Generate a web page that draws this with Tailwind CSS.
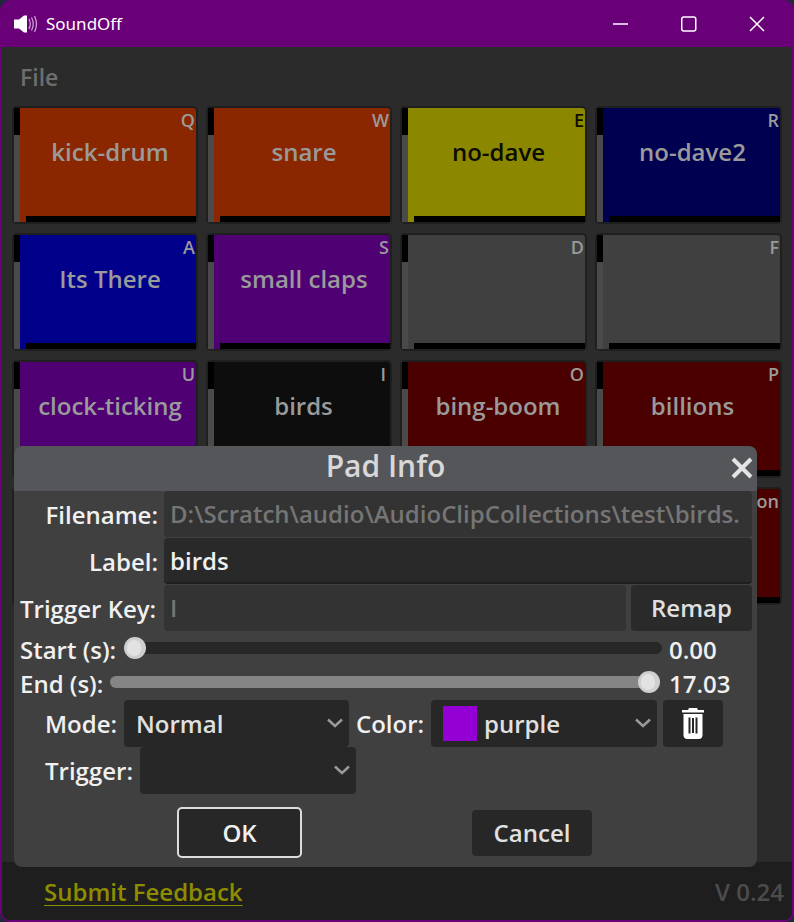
<!DOCTYPE html>
<html lang="en">
<head>
  <meta charset="UTF-8">
  <title>SoundOff</title>
  <script src="https://cdn.jsdelivr.net/npm/@tailwindcss/browser@4"></script>
</head>
<body class="bg-[#1b2a38] font-['Open_Sans','Noto_Sans',sans-serif] font-semibold">
  <div class="relative w-[794px] h-[922px] overflow-hidden rounded-[10px] bg-[#6a0078] flex flex-col">
    <!-- title bar -->
    <div class="h-[47px] shrink-0 flex items-center text-white">
      <svg class="ml-[13px] w-[25px] h-[20px]" viewBox="0 0 25 20" fill="none">
        <path d="M1 5.500h5l5-4h3v17h-3l-5-4H1z" fill="#fff"/>
        <path d="M16 5q2.500 5 0 10M18.500 3.500q3.500 6.500 0 13M21.500 2q4 8 0 16" stroke="#c9a0d4" stroke-width="1.300"/>
      </svg>
      <span class="ml-[8px] text-[17px] font-normal font-['Noto_Sans',sans-serif]">SoundOff</span>
      <svg class="ml-auto mr-[29px] w-[153px] h-[16px]" viewBox="0 0 153 16" fill="none" stroke="#fff">
        <path d="M1 8h15" stroke-width="1.500"/>
        <rect x="69.750" y="1" width="14" height="14" rx="2" stroke-width="1.500"/>
        <path d="M138 1l14 14M152 1l-14 14" stroke-width="1.500"/>
      </svg>
    </div>

    <div class="flex-1 mx-[2px] mb-[2px] rounded-b-[8px] bg-[#2b2b2b] flex flex-col overflow-hidden">
      <div class="h-[59px] shrink-0 pl-[18px] pt-[15px] text-[23px] leading-[30px] text-[#6e6e6e]">File</div>

      <!-- pads -->
      <div class="ml-[10px] grid grid-cols-[186px_186px_187px_187px] auto-rows-[118px] gap-x-[8px] gap-y-[9px]">
        <div class="flex rounded-[5px] bg-[#1f1f1f] p-[2px] h-[118px]">
          <div class="w-[6px] flex flex-col bg-[#4a4a4a]"><div class="h-[27px] bg-black"></div></div>
          <div class="relative flex-1 flex flex-col rounded-tr-[3px] bg-[#8b2700] text-[#9a9a9a]">
            <span class="absolute top-[1px] right-[1px] text-[18px] leading-[22px]">Q</span>
            <div class="flex-1 pt-[27px] pl-[4px] text-center text-[24px] leading-[34px]">kick-drum</div>
            <div class="ml-[6px] h-[6px] bg-black"></div>
          </div>
        </div>
        <div class="flex rounded-[5px] bg-[#1f1f1f] p-[2px] h-[118px]">
          <div class="w-[6px] flex flex-col bg-[#4a4a4a]"><div class="h-[27px] bg-black"></div></div>
          <div class="relative flex-1 flex flex-col rounded-tr-[3px] bg-[#8b2700] text-[#9a9a9a]">
            <span class="absolute top-[1px] right-[1px] text-[18px] leading-[22px]">W</span>
            <div class="flex-1 pt-[27px] pl-[4px] text-center text-[24px] leading-[34px]">snare</div>
            <div class="ml-[6px] h-[6px] bg-black"></div>
          </div>
        </div>
        <div class="flex rounded-[5px] bg-[#1f1f1f] p-[2px] h-[118px]">
          <div class="w-[6px] flex flex-col bg-[#4a4a4a]"><div class="h-[27px] bg-black"></div></div>
          <div class="relative flex-1 flex flex-col rounded-tr-[3px] bg-[#8b8800] text-[#0c0c00]">
            <span class="absolute top-[1px] right-[1px] text-[18px] leading-[22px]">E</span>
            <div class="flex-1 pt-[27px] pl-[4px] text-center text-[24px] leading-[34px]">no-dave</div>
            <div class="ml-[6px] h-[6px] bg-black"></div>
          </div>
        </div>
        <div class="flex rounded-[5px] bg-[#1f1f1f] p-[2px] h-[118px]">
          <div class="w-[6px] flex flex-col bg-[#4a4a4a]"><div class="h-[27px] bg-black"></div></div>
          <div class="relative flex-1 flex flex-col rounded-tr-[3px] bg-[#000050] text-[#9a9a9a]">
            <span class="absolute top-[1px] right-[1px] text-[18px] leading-[22px]">R</span>
            <div class="flex-1 pt-[27px] pl-[2px] text-center text-[24px] leading-[34px]">no-dave2</div>
            <div class="ml-[6px] h-[6px] bg-black"></div>
          </div>
        </div>

        <div class="flex rounded-[5px] bg-[#1f1f1f] p-[2px] h-[118px]">
          <div class="w-[6px] flex flex-col bg-[#4a4a4a]"><div class="h-[27px] bg-black"></div></div>
          <div class="relative flex-1 flex flex-col rounded-tr-[3px] bg-[#00008b] text-[#9a9a9a]">
            <span class="absolute top-[1px] right-[1px] text-[18px] leading-[22px]">A</span>
            <div class="flex-1 pt-[27px] pl-[4px] text-center text-[24px] leading-[34px]">Its There</div>
            <div class="ml-[6px] h-[6px] bg-black"></div>
          </div>
        </div>
        <div class="flex rounded-[5px] bg-[#1f1f1f] p-[2px] h-[118px]">
          <div class="w-[6px] flex flex-col bg-[#4a4a4a]"><div class="h-[27px] bg-black"></div></div>
          <div class="relative flex-1 flex flex-col rounded-tr-[3px] bg-[#4f0072] text-[#9a9a9a]">
            <span class="absolute top-[1px] right-[1px] text-[18px] leading-[22px]">S</span>
            <div class="flex-1 pt-[27px] pl-[4px] text-center text-[24px] leading-[34px]">small claps</div>
            <div class="ml-[6px] h-[6px] bg-black"></div>
          </div>
        </div>
        <div class="flex rounded-[5px] bg-[#1f1f1f] p-[2px] h-[118px]">
          <div class="w-[6px] flex flex-col bg-[#4a4a4a]"><div class="h-[27px] bg-black"></div></div>
          <div class="relative flex-1 flex flex-col rounded-tr-[3px] bg-[#404040] text-[#9a9a9a]">
            <span class="absolute top-[1px] right-[1px] text-[18px] leading-[22px]">D</span>
            <div class="flex-1"></div>
            <div class="ml-[6px] h-[6px] bg-black"></div>
          </div>
        </div>
        <div class="flex rounded-[5px] bg-[#1f1f1f] p-[2px] h-[118px]">
          <div class="w-[6px] flex flex-col bg-[#4a4a4a]"><div class="h-[27px] bg-black"></div></div>
          <div class="relative flex-1 flex flex-col rounded-tr-[3px] bg-[#404040] text-[#9a9a9a]">
            <span class="absolute top-[1px] right-[1px] text-[18px] leading-[22px]">F</span>
            <div class="flex-1"></div>
            <div class="ml-[6px] h-[6px] bg-black"></div>
          </div>
        </div>

        <div class="flex rounded-[5px] bg-[#1f1f1f] p-[2px] h-[118px]">
          <div class="w-[6px] flex flex-col bg-[#4a4a4a]"><div class="h-[27px] bg-black"></div></div>
          <div class="relative flex-1 flex flex-col rounded-tr-[3px] bg-[#4f0072] text-[#9a9a9a]">
            <span class="absolute top-[1px] right-[1px] text-[18px] leading-[22px]">U</span>
            <div class="flex-1 pt-[27px] pl-[4px] text-center text-[24px] leading-[34px]">clock-ticking</div>
            <div class="ml-[6px] h-[6px] bg-black"></div>
          </div>
        </div>
        <div class="flex rounded-[5px] bg-[#1f1f1f] p-[2px] h-[118px]">
          <div class="w-[6px] flex flex-col bg-[#4a4a4a]"><div class="h-[27px] bg-black"></div></div>
          <div class="relative flex-1 flex flex-col rounded-tr-[3px] bg-[#0d0d0d] text-[#9a9a9a]">
            <span class="absolute top-[1px] right-[4px] text-[18px] leading-[22px]">I</span>
            <div class="flex-1 pt-[27px] pl-[3px] text-center text-[24px] leading-[34px]">birds</div>
            <div class="ml-[6px] h-[6px] bg-black"></div>
          </div>
        </div>
        <div class="flex rounded-[5px] bg-[#1f1f1f] p-[2px] h-[118px]">
          <div class="w-[6px] flex flex-col bg-[#4a4a4a]"><div class="h-[27px] bg-black"></div></div>
          <div class="relative flex-1 flex flex-col rounded-tr-[3px] bg-[#4b0000] text-[#9a9a9a]">
            <span class="absolute top-[1px] right-[1px] text-[18px] leading-[22px]">O</span>
            <div class="flex-1 pt-[27px] pl-[3px] text-center text-[24px] leading-[34px]">bing-boom</div>
            <div class="ml-[6px] h-[6px] bg-black"></div>
          </div>
        </div>
        <div class="flex rounded-[5px] bg-[#1f1f1f] p-[2px] h-[118px]">
          <div class="w-[6px] flex flex-col bg-[#4a4a4a]"><div class="h-[27px] bg-black"></div></div>
          <div class="relative flex-1 flex flex-col rounded-tr-[3px] bg-[#4b0000] text-[#9a9a9a]">
            <span class="absolute top-[1px] right-[1px] text-[18px] leading-[22px]">P</span>
            <div class="flex-1 pt-[27px] pl-[2px] text-center text-[24px] leading-[34px]">billions</div>
            <div class="ml-[6px] h-[6px] bg-black"></div>
          </div>
        </div>

        <div class="flex rounded-[5px] bg-[#1f1f1f] p-[2px] h-[118px]"></div>
        <div class="flex rounded-[5px] bg-[#1f1f1f] p-[2px] h-[118px]"></div>
        <div class="flex rounded-[5px] bg-[#1f1f1f] p-[2px] h-[118px]"></div>
        <div class="flex rounded-[5px] bg-[#1f1f1f] p-[2px] h-[118px]">
          <div class="w-[6px] bg-[#4a4a4a]"></div>
          <div class="relative flex-1 flex flex-col bg-[#4b0000] text-[#9a9a9a]">
            <div class="flex-1 flex justify-end pt-[1px] pr-[1px] text-[18px] leading-[22px]">on</div>
            <div class="ml-[6px] h-[6px] bg-black"></div>
          </div>
        </div>
      </div>

      <!-- footer -->
      <div class="mt-auto h-[58px] shrink-0 bg-[#1e1e1e] flex items-start justify-between pl-[42px] pr-[8px] pt-[13px] text-[24px] leading-[33px]">
        <a class="text-[#8f8c00] underline underline-offset-[4px] decoration-[1px]">Submit Feedback</a>
        <span class="text-[#4c4c4c]">V 0.24</span>
      </div>
    </div>

    <!-- pad info dialog -->
    <div class="absolute left-[14px] top-[446px] w-[743px] h-[421px] rounded-[8px] bg-[#404040] overflow-hidden text-[24px] leading-[33px] text-[#f0f0f0]">
      <div class="relative h-[45px] rounded-t-[8px] bg-[#54565a] text-center text-[30px] leading-[40px] text-[#d8d8d8]">
        Pad Info
        <svg class="absolute right-[4px] top-[11px] w-[22px] h-[22px]" viewBox="0 0 22 22" fill="none" stroke="#e4e4e4" stroke-width="4"><path d="M2 2l18 18M20 2L2 20"/></svg>
      </div>
      <div class="flex h-[46px] items-center">
        <div class="w-[144px] text-right">Filename:</div>
        <div class="ml-[6px] w-[588px] h-[46px] pl-[6px] leading-[46px] rounded-[4px] bg-[#333333] text-[#757575] overflow-hidden whitespace-nowrap">D:\Scratch\audio\AudioClipCollections\test\birds.</div>
      </div>
      <div class="flex h-[46px] mt-[1px] items-center">
        <div class="w-[144px] text-right">Label:</div>
        <div class="ml-[6px] w-[588px] h-[46px] pl-[6px] leading-[46px] rounded-[4px] bg-[#292929] border-b-2 border-[#1f1f1f]">birds</div>
      </div>
      <div class="flex h-[46px] mt-[1px] items-center">
        <div class="ml-[6px] w-[138px] whitespace-nowrap">Trigger Key:</div>
        <div class="ml-[6px] w-[462px] h-[46px] pl-[6px] leading-[46px] rounded-[4px] bg-[#333333] text-[#757575]">I</div>
        <div class="ml-[5px] w-[121px] h-[46px] leading-[46px] text-center rounded-[4px] bg-[#2a2a2a] text-[#e0e0e0]">Remap</div>
      </div>
      <div class="flex h-[34px] mt-[1px] items-center">
        <div class="ml-[6px] w-[104px] whitespace-nowrap">Start (s):</div>
        <div class="relative w-[538px] h-[12px] -mt-[2px] rounded-full bg-[#282828]">
          <div class="absolute left-0 top-[-5px] w-[22px] h-[22px] rounded-full bg-[#cfcfcf] pl-[3px] pt-[3px]"><div class="w-[14px] h-[16px] rounded-full bg-[#e2e2e2]"></div></div>
        </div>
        <div class="ml-[7px]">0.00</div>
      </div>
      <div class="flex h-[34px] items-center">
        <div class="ml-[6px] w-[90px] whitespace-nowrap">End (s):</div>
        <div class="relative w-[540px] h-[12px] -mt-[2px] rounded-full bg-[#858585]">
          <div class="absolute right-[-10px] top-[-5px] w-[22px] h-[22px] rounded-full bg-[#cfcfcf] pl-[3px] pt-[3px]"><div class="w-[14px] h-[16px] rounded-full bg-[#e2e2e2]"></div></div>
        </div>
        <div class="ml-[19px]">17.03</div>
      </div>
      <div class="flex h-[47px] items-center">
        <div class="ml-[31px] w-[72px] whitespace-nowrap">Mode:</div>
        <div class="ml-[7px] w-[225px] h-[47px] pl-[12px] pr-[6px] leading-[48px] flex justify-between rounded-[4px] bg-[#272727] text-[#e0e0e0]">
          Normal
          <svg class="mt-[18px] w-[16px] h-[10px]" viewBox="0 0 16 10" fill="none" stroke="#999999" stroke-width="2.500"><path d="M1 1.500l7 6.500 7-6.500"/></svg>
        </div>
        <div class="ml-[7px] w-[68px]">Color:</div>
        <div class="ml-[7px] w-[226px] h-[47px] pl-[12px] pr-[6px] leading-[48px] flex items-start rounded-[4px] bg-[#272727] text-[#e0e0e0]">
          <div class="mt-[6px] w-[34px] h-[35px] bg-[#9400d3]"></div>
          <span class="ml-[7px]">purple</span>
          <svg class="ml-auto mt-[18px] w-[16px] h-[10px]" viewBox="0 0 16 10" fill="none" stroke="#999999" stroke-width="2.500"><path d="M1 1.500l7 6.500 7-6.500"/></svg>
        </div>
        <div class="ml-[6px] w-[60px] h-[47px] flex justify-center pt-[7px] rounded-[4px] bg-[#272727]">
          <svg class="w-[24px] h-[33px]" viewBox="0 0 24 33" fill="#ffffff">
            <path d="M8 1h8l1 2h6v2.500H1V3h6z"/>
            <path fill-rule="evenodd" d="M2.500 7h19v21q0 4-4 4h-11q-4 0-4-4zM7.500 10.500v16h2v-16zM11 11v15h2V11zM14.500 10.500v16h2v-16z"/>
          </svg>
        </div>
      </div>
      <div class="flex h-[47px] items-center">
        <div class="ml-[31px] w-[88px] whitespace-nowrap">Trigger:</div>
        <div class="ml-[7px] w-[216px] h-[47px] pr-[6px] flex justify-end rounded-[4px] bg-[#272727]">
          <svg class="mt-[18px] w-[16px] h-[10px]" viewBox="0 0 16 10" fill="none" stroke="#999999" stroke-width="2.500"><path d="M1 1.500l7 6.500 7-6.500"/></svg>
        </div>
      </div>
      <div class="flex mt-[13px] items-center">
        <div class="ml-[163px] w-[125px] h-[51px] leading-[47px] text-center rounded-[5px] border-2 border-[#dddddd] bg-[#272727]">OK</div>
        <div class="ml-[170px] w-[120px] h-[46px] leading-[46px] text-center rounded-[4px] bg-[#272727] text-[#e0e0e0]">Cancel</div>
      </div>
    </div>
  </div>
</body>
</html>
